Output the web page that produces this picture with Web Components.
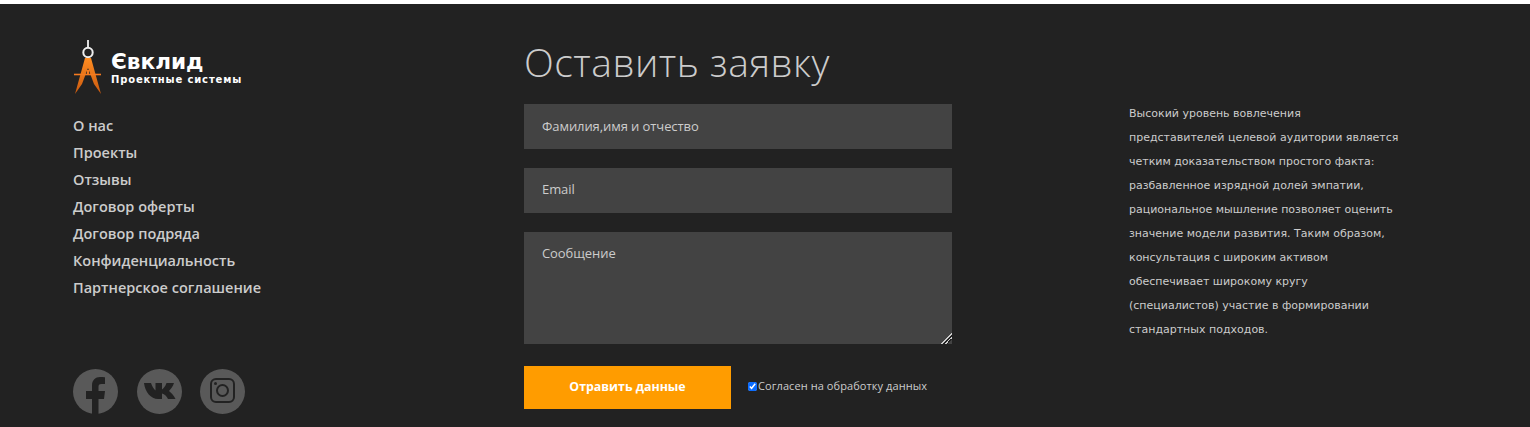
<!DOCTYPE html>
<html lang="ru">
<head>
<meta charset="utf-8">
<title>Евклид</title>
<style>
  html, body { margin: 0; background: #fff; }
  body { padding-top: 4px; font-family: "Open Sans", sans-serif; }
</style>
</head>
<body>
<site-footer>
  <footer-brand slot="left"></footer-brand>
  <footer-nav slot="left">
    <a href="#">О нас</a>
    <a href="#">Проекты</a>
    <a href="#">Отзывы</a>
    <a href="#">Договор оферты</a>
    <a href="#">Договор подряда</a>
    <a href="#">Конфиденциальность</a>
    <a href="#">Партнерское соглашение</a>
  </footer-nav>
  <social-links slot="left"></social-links>
  <request-form slot="middle"></request-form>
  <footer-about slot="right">Высокий уровень вовлечения<br>
представителей целевой аудитории является<br>
четким доказательством простого факта:<br>
разбавленное изрядной долей эмпатии,<br>
рациональное мышление позволяет оценить<br>
значение модели развития. Таким образом,<br>
консультация с широким активом<br>
обеспечивает широкому кругу<br>
(специалистов) участие в формировании<br>
стандартных подходов.</footer-about>
</site-footer>

<script>
// Обёртка футера: три колонки
class SiteFooter extends HTMLElement {
  constructor() {
    super();
    this.attachShadow({ mode: 'open' });
    this.shadowRoot.innerHTML = `
      <style>
        :host { display: block; background: #222; height: 423px; box-sizing: border-box; color: #ccc; overflow: hidden; }
        .cols { display: flex; padding: 33px 0 0 73px; }
        .left { width: 451px; height: 377px; flex: none; display: flex; flex-direction: column; }
        .middle { width: 428px; flex: none; }
        .right { margin-left: 177px; padding-top: 65px; width: 280px; flex: none; }
      </style>
      <div class="cols">
        <div class="left"><slot name="left"></slot></div>
        <div class="middle"><slot name="middle"></slot></div>
        <div class="right"><slot name="right"></slot></div>
      </div>`;
  }
}

class FooterBrand extends HTMLElement {
  constructor() {
    super();
    this.attachShadow({ mode: 'open' });
    this.shadowRoot.innerHTML = `
      <style>
        :host { display: flex; align-items: flex-start; height: 60px; margin-bottom: 15px; }
        svg { width: 32px; height: 56px; flex: none; margin-top: 3px; }
        .text { margin: 14px 0 0 6px; color: #fff; }
        .name { font: 700 21.600px/22px "DejaVu Sans", sans-serif; }
        .sub { font: 700 10px/11px "DejaVu Sans", sans-serif; letter-spacing: .85px; margin-top: 1px; }
      </style>
      <svg viewBox="0 0 32 56" fill="none">
        <defs>
          <linearGradient id="leg" x1="0" y1="0" x2="0" y2="1">
            <stop offset="0" stop-color="#ff8d22"/>
            <stop offset="1" stop-color="#c9590f"/>
          </linearGradient>
        </defs>
        <path d="M15 0v7" stroke="#ddd" stroke-width="2"/>
        <circle cx="15" cy="12.500" r="4.700" stroke="#eee" stroke-width="2"/>
        <path d="M12 18h6L28 54l-7-10-6-16-6 16-7 10z" fill="url(#leg)"/>
        <path d="M1 34.500h27" stroke="#f47a1f" stroke-width="1.600"/>
        <path d="M15 30v5" stroke="#f47a1f" stroke-width="2"/>
      </svg>
      <div class="text">
        <div class="name">Євклид</div>
        <div class="sub">Проектные системы</div>
      </div>`;
  }
}

class FooterNav extends HTMLElement {
  constructor() {
    super();
    this.attachShadow({ mode: 'open' });
    this.shadowRoot.innerHTML = `
      <style>
        :host { display: flex; flex-direction: column; }
        ::slotted(a) { font: 600 14.500px/27px "Open Sans", sans-serif; color: #ccc; text-decoration: none; }
      </style>
      <slot></slot>`;
  }
}

class SocialLinks extends HTMLElement {
  constructor() {
    super();
    this.attachShadow({ mode: 'open' });
    this.shadowRoot.innerHTML = `
      <style>
        :host { display: flex; gap: 18.500px; margin-top: auto; }
        a { display: block; width: 45px; height: 45px; }
        svg { display: block; width: 45px; height: 45px; }
      </style>
      <a href="#" aria-label="Facebook"><svg viewBox="0 0 45 45">
        <circle cx="22.500" cy="22.500" r="22.500" fill="#595959"/>
        <path d="M19 45V30h-6v-8h6v-5.500C19 11 22.500 8 27 8c2 0 4 .2 5 .3V15h-3.500c-2.500 0-3 1.300-3 3v4H32l-1 8h-5.500v15z" fill="#222"/>
      </svg></a>
      <a href="#" aria-label="VK"><svg viewBox="0 0 45 45">
        <circle cx="22.500" cy="22.500" r="22.500" fill="#595959"/>
        <path d="M7 14h7c1 3 2.500 6 4.500 7.500V14h6.500v6.500c1.500-1 3.500-3.500 4.500-6.500H37c-1 3.500-3.500 6.500-5 8 2 1.500 5 4.500 6.500 8h-7.500c-1-2.500-3.500-5-6-5.500V30h-4C14 30 8 23 7 14z" fill="#222"/>
      </svg></a>
      <a href="#" aria-label="Instagram"><svg viewBox="0 0 45 45" fill="none">
        <circle cx="22.500" cy="22.500" r="22.500" fill="#595959"/>
        <rect x="11" y="10" width="23" height="23" rx="5" stroke="#222" stroke-width="2"/>
        <circle cx="22.500" cy="21.500" r="5.500" stroke="#222" stroke-width="2"/>
        <circle cx="15.500" cy="14.500" r="1.500" fill="#222"/>
      </svg></a>`;
  }
}

class RequestForm extends HTMLElement {
  constructor() {
    super();
    this.attachShadow({ mode: 'open' });
    this.shadowRoot.innerHTML = `
      <style>
        :host { display: block; }
        h2 { margin: 0 0 17px; font: 300 39px/50px "Open Sans", sans-serif; letter-spacing: .5px; color: #ccc; }
        form { display: flex; flex-direction: column; }
        input[type=text], input[type=email], textarea {
          display: block; box-sizing: border-box; width: 428px; border: 0; border-radius: 0; outline: 0;
          background: #434343; color: #ccc; padding: 0 18px; margin: 0 0 19px;
          font: 400 13px/18px "Open Sans", sans-serif; letter-spacing: -.08px;
        }
        input[type=text] { height: 45px; padding-bottom: 2px; }
        input[type=email] { height: 45px; padding-bottom: 3px; }
        textarea { height: 112px; padding-top: 12px; margin-bottom: 22px; resize: vertical; }
        textarea::-webkit-resizer {
          background: linear-gradient(135deg, transparent 0 62%, #ccc 62% 68%, #222 68% 74%, #ccc 74% 80%, #222 80% 86%, transparent 86%);
        }
        ::placeholder { color: #ccc; opacity: 1; }
        .row { display: flex; align-items: center; }
        button {
          width: 207px; height: 43px; border: 0; background: #ff9c00; color: #fff; padding: 0 0 2px; margin-right: 17px;
          font: 700 12.400px/18px "Open Sans", sans-serif;
        }
        label { display: flex; align-items: center; gap: 1px; font: 400 11px/14px "Open Sans", sans-serif; letter-spacing: .08px; color: #ccc; position: relative; top: -2px; }
        input[type=checkbox] { width: 9px; height: 9px; margin: 0; accent-color: #0a6cff; position: relative; top: 1px; }
      </style>
      <h2>Оставить заявку</h2>
      <form onsubmit="return false">
        <input type="text" placeholder="Фамилия,имя и отчество">
        <input type="email" placeholder="Email">
        <textarea placeholder="Сообщение"></textarea>
        <div class="row">
          <button type="submit">Отравить данные</button>
          <label><input type="checkbox" checked>Согласен на обработку данных</label>
        </div>
      </form>`;
  }
}

class FooterAbout extends HTMLElement {
  constructor() {
    super();
    this.attachShadow({ mode: 'open' });
    this.shadowRoot.innerHTML = `
      <style>
        :host { display: block; font: 400 11px/24px "DejaVu Sans", sans-serif; color: #ccc; white-space: nowrap; }
      </style>
      <slot></slot>`;
  }
}

customElements.define('site-footer', SiteFooter);
customElements.define('footer-brand', FooterBrand);
customElements.define('footer-nav', FooterNav);
customElements.define('social-links', SocialLinks);
customElements.define('request-form', RequestForm);
customElements.define('footer-about', FooterAbout);
</script>
</body>
</html>
